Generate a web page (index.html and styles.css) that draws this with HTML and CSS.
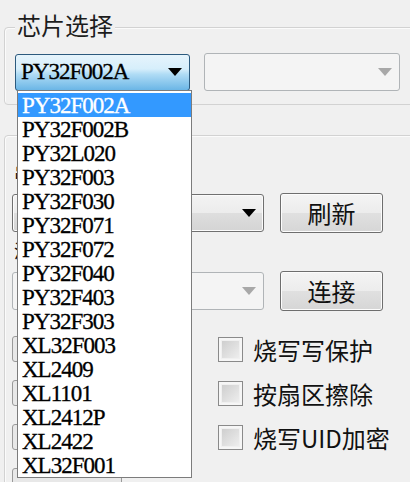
FILE: index.html
```html
<!DOCTYPE html>
<html lang="zh-CN">
<head>
  <meta charset="UTF-8" />
  <title>芯片选择</title>
  <link rel="stylesheet" href="styles.css">
</head>
<body>
  <div class="panel">
    <div class="group chip-group">
      <span class="group-title">芯片选择</span>
      <div class="row chip-row">
        <div class="combo combo-open">
          <span class="combo-text">PY32F002A</span>
          <svg class="arrow" viewBox="0 0 14 8"><path d="M0 0h14L7 8z"/></svg>
        </div>
        <div class="combo combo-disabled combo-wide">
          <span class="combo-text"></span>
          <svg class="arrow" viewBox="0 0 14 8"><path d="M0 0h14L7 8z"/></svg>
        </div>
      </div>
    </div>

    <div class="group port-group">
      <div class="field-label">串口</div>
      <div class="row">
        <div class="combo combo-normal combo-port">
          <span class="combo-text"></span>
          <svg class="arrow" viewBox="0 0 14 8"><path d="M0 0h14L7 8z"/></svg>
        </div>
        <button class="btn">刷新</button>
      </div>
      <div class="field-label">波特率</div>
      <div class="row">
        <div class="combo combo-disabled combo-port">
          <span class="combo-text"></span>
          <svg class="arrow" viewBox="0 0 14 8"><path d="M0 0h14L7 8z"/></svg>
        </div>
        <button class="btn">连接</button>
      </div>

      <div class="options">
        <div class="left-col">
          <div class="opt-row"><span class="mini-btn"></span></div>
          <div class="opt-row"><span class="mini-btn"></span></div>
          <div class="opt-row"><span class="mini-btn"></span></div>
          <div class="opt-row"><span class="mini-btn mini-low">一键烧录</span></div>
        </div>
        <div class="check-col">
          <label class="opt-row check"><span class="box"></span>烧写写保护</label>
          <label class="opt-row check"><span class="box"></span>按扇区擦除</label>
          <label class="opt-row check"><span class="box"></span>烧写UID加密</label>
        </div>
      </div>
    </div>

    <ul class="dropdown">
      <li class="selected">PY32F002A</li>
      <li>PY32F002B</li>
      <li>PY32L020</li>
      <li>PY32F003</li>
      <li>PY32F030</li>
      <li>PY32F071</li>
      <li>PY32F072</li>
      <li>PY32F040</li>
      <li>PY32F403</li>
      <li>PY32F303</li>
      <li>XL32F003</li>
      <li>XL2409</li>
      <li>XL1101</li>
      <li>XL2412P</li>
      <li>XL2422</li>
      <li>XL32F001</li>
    </ul>
  </div>
</body>
</html>
```

FILE: styles.css
```css
* {
  box-sizing: border-box;
  margin: 0;
  padding: 0;
}

body {
  width: 410px;
  height: 482px;
  overflow: hidden;
  background: #f0f0f0;
  font-family: "Noto Sans CJK SC", "Noto Sans", sans-serif;
  color: #111;
}

.panel {
  position: relative;
  height: 482px;
  overflow: hidden;
}

.group {
  width: 440px;
  border: 1px solid #d2d2d2;
  border-radius: 4px;
  box-shadow: inset 1px 1px 0 #fbfbfb;
}

.group-title {
  display: block;
  width: fit-content;
  margin: -18px 0 0 0;
  padding: 0 2px;
  font-size: 24px;
  line-height: 30px;
  background: #f0f0f0;
  color: #1c1c1c;
}

.chip-group {
  margin: 27px 0 0 4px;
  height: 78px;
  padding-left: 10px;
}

.port-group {
  margin: 30px 0 0 4px;
  height: 400px;
  padding-left: 7px;
}

.row {
  display: flex;
  align-items: center;
}

.chip-row {
  margin-top: 13px;
  gap: 14px;
}

.port-group .row {
  gap: 16px;
  margin-top: 9px;
}

.field-label {
  margin-top: 24px;
  font-size: 18px;
  line-height: 24px;
  padding-left: 2px;
}

.port-group .row + .field-label {
  margin-top: 5px;
}

/* combo boxes */
.combo {
  display: flex;
  align-items: center;
  justify-content: space-between;
  height: 38px;
  padding: 0 7px 0 5px;
  border: 1px solid #8a8a8a;
  border-radius: 3px;
}

.combo-text,
.dropdown li {
  font-family: "Liberation Serif", "DejaVu Serif", serif;
  font-size: 23px;
  letter-spacing: -1px;
  color: #000;
  -webkit-text-stroke: 0.3px #000;
}

.arrow {
  width: 14px;
  height: 8px;
  fill: #000;
}

.combo-open {
  width: 175px;
  height: 37px;
  border-color: #2c5a7e;
  background: linear-gradient(#e6f4fc 0%, #d6eefb 40%, #b0dcf5 55%, #6bb6e6 100%);
}

.combo-wide {
  width: 196px;
}

.combo-port {
  width: 252px;
}

.combo-normal {
  border-color: #707070;
  background: linear-gradient(#f3f3f3 0%, #ececec 50%, #dedede 51%, #d4d4d4 100%);
  box-shadow: inset 0 0 0 1px #fbfbfb;
}

.combo-disabled {
  border-color: #b0b4b7;
  background: #f4f4f4;
}

.combo-disabled .arrow {
  fill: #a8a8a8;
}

/* buttons */
.btn {
  width: 103px;
  height: 40px;
  border: 1px solid #6e6e6e;
  border-radius: 3px;
  background: linear-gradient(#f4f4f4 0%, #ececec 50%, #e0e0e0 51%, #d6d6d6 100%);
  box-shadow: inset 0 0 0 1px #fcfcfc;
  font-family: "Noto Sans CJK SC", sans-serif;
  font-size: 24px;
  line-height: 30px;
  color: #111;
}

/* options */
.options {
  display: flex;
  margin-top: 16px;
}

.left-col {
  width: 206px;
}

.opt-row {
  display: flex;
  align-items: center;
  height: 44px;
}

.mini-btn {
  display: block;
  width: 110px;
  height: 26px;
  border: 1px solid #9a9a9a;
  border-radius: 3px;
  background: #e8e8e8;
}

.mini-low {
  font-size: 20px;
  line-height: 24px;
  padding-left: 18px;
  padding-top: 12px;
  height: 40px;
  margin-top: 14px;
}

.check {
  gap: 10px;
  font-size: 24px;
  color: #111;
}

.box {
  width: 25px;
  height: 25px;
  border: 1px solid #8a8a8a;
  padding: 3px;
  background: #f4f4f4;
  background-image: linear-gradient(135deg, #c9c9c9, #f3f3f3);
  background-clip: content-box;
  box-shadow: inset 0 0 0 2px #f6f6f6;
}

/* opened drop-down list */
.dropdown {
  position: absolute;
  left: 17px;
  top: 90px;
  width: 175px;
  height: 388px;
  list-style: none;
  background: #fff;
  border: 1px solid #7c7c7c;
  padding-top: 2px;
}

.dropdown li {
  height: 24px;
  line-height: 26px;
  padding-left: 4px;
}

.dropdown li.selected {
  background: #3399ff;
  color: #fff;
  -webkit-text-stroke: 0.3px #fff;
}
```
